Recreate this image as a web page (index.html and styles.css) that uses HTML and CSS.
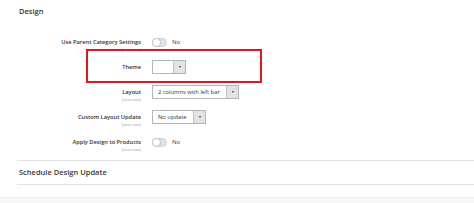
FILE: index.html
```html
<!DOCTYPE html>
<html>
	<head>
		<meta charset="UTF-8">
		<title>Design</title>
		<link rel="stylesheet" href="styles.css">
	</head>
	<body>
		<div id="page">
			<div class="section-title">Design</div>
			<div class="fieldset">
				<div class="row">
					<div class="label"><span class="name">Use Parent Category Settings</span><span class="scope">[store view]</span></div>
					<div class="control"><span class="toggle"><span class="knob"></span></span><span class="toggle-text">No</span></div>
				</div>
				<div class="row">
					<div class="label"><span class="name">Theme</span></div>
					<div class="control"><span class="select theme"><span class="value"></span><span class="btn"><i class="arrow"></i></span></span></div>
				</div>
				<div class="row">
					<div class="label"><span class="name">Layout</span><span class="scope">[store view]</span></div>
					<div class="control"><span class="select layout"><span class="value">2 columns with left bar</span><span class="btn"><i class="arrow"></i></span></span></div>
				</div>
				<div class="row">
					<div class="label"><span class="name">Custom Layout Update</span><span class="scope">[store view]</span></div>
					<div class="control"><span class="select update"><span class="value">No update</span><span class="btn"><i class="arrow"></i></span></span></div>
				</div>
				<div class="row">
					<div class="label"><span class="name">Apply Design to Products</span><span class="scope">[store view]</span></div>
					<div class="control"><span class="toggle"><span class="knob"></span></span><span class="toggle-text">No</span></div>
				</div>
				<div class="highlight"></div>
			</div>
			<div class="sub-section">Schedule Design Update</div>
			<div class="footer-band"></div>
		</div>
	</body>
</html>
```

FILE: styles.css
```css
*{margin: 0;padding: 0;box-sizing: border-box;}
body{background: #fff;font-family: "Open Sans", "Liberation Sans", sans-serif;color: #303030;}
#page{width: 474px;height: 203px;overflow: hidden;}
.section-title{height: 22px;line-height: 22px;padding-left: 19px;font-size: 7.5px;font-weight: 600;color: #41362f;}
.fieldset{position: relative;padding-top: 13px;}
.row{display: grid;grid-template-columns: 141px auto;column-gap: 11px;height: 25px;align-items: start;}
.label{display: flex;flex-direction: column;align-items: flex-end;text-align: right;}
.label .name{font-size: 5.7px;font-weight: 600;line-height: 14px;color: #333;}
.label .scope{font-size: 3.6px;line-height: 3px;color: #9a9a9a;margin-top: -1px;}
.control{display: flex;align-items: center;height: 14px;}
.toggle{position: relative;display: inline-block;width: 15px;height: 9px;border-radius: 5px;background: #e3e3e3;border: 1px solid #d3d3d3;}
.toggle .knob{position: absolute;left: -1px;top: -1px;width: 9px;height: 9px;border-radius: 50%;background: #fff;border: 1px solid #c8c8c8;box-shadow: 0 0 1px rgba(0,0,0,.15);}
.toggle-text{margin-left: 5px;font-size: 6px;color: #444;}
.select{display: flex;height: 14px;border: 1px solid #b5b5b5;background: #fff;}
.select .value{flex: 1;font-size: 5.8px;line-height: 12px;padding-left: 5px;color: #333;white-space: nowrap;}
.select .btn{width: 12px;height: 12px;background: #e3e3e3;border-left: 1px solid #c2c2c2;display: flex;align-items: center;justify-content: center;}
.select .arrow{width: 0;height: 0;border-left: 1.5px solid transparent;border-right: 1.5px solid transparent;border-top: 2px solid #41362f;}
.select.theme{width: 34px;}
.select.layout{width: 87px;}
.select.update{width: 54px;}
.highlight{position: absolute;left: 86px;top: 27px;width: 176px;height: 34px;border: 2px solid #e4171f;}
.sub-section{margin-left: 17px;border-top: 1px solid #e3e3e3;border-bottom: 1px solid #e3e3e3;height: 25px;line-height: 23px;padding-left: 2px;font-size: 7.5px;font-weight: 600;color: #41362f;}
.footer-band{margin-top: 12px;height: 10px;background: #f6f6f6;border-top: 1px solid #ececec;}
```
